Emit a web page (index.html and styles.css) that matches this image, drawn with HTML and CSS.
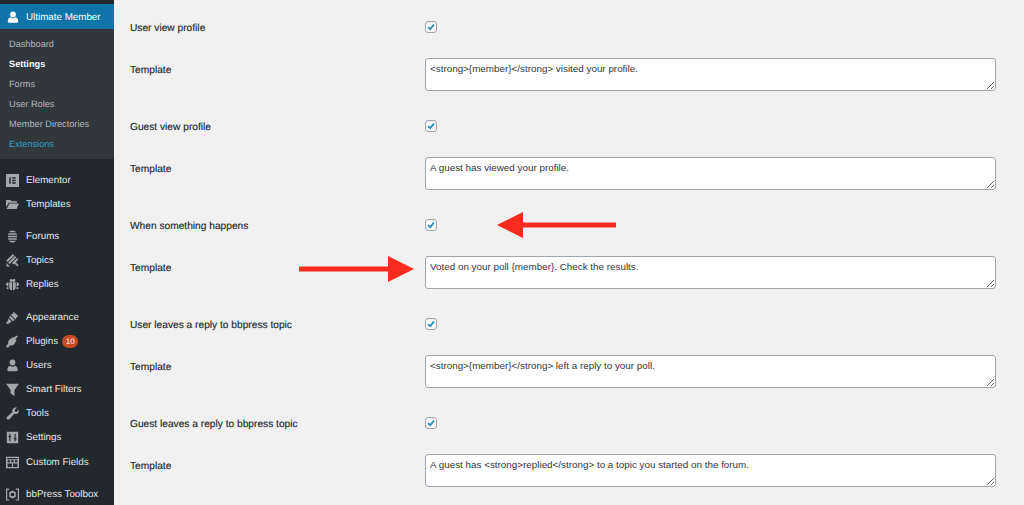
FILE: index.html
```html
<!DOCTYPE html>
<html lang="en">
<head>
<meta charset="utf-8">
<title>Ultimate Member Settings</title>
<link rel="stylesheet" href="styles.css">
</head>
<body>
<div class="page">
<nav class="sidebar">
  <div class="current">
    <svg class="ic" viewBox="0 0 16 16"><circle cx="8" cy="4.600" r="3.800"/><path d="M1 14.500c0-4 1.800-5.600 3.900-6.200.8.900 1.900 1.400 3.100 1.400s2.300-.5 3.100-1.400c2.100.6 3.900 2.200 3.900 6.200 0 .6-3.200 1.300-7 1.300s-7-.7-7-1.300z"/></svg>
    <span>Ultimate Member</span>
  </div>
  <ul class="submenu">
    <li>Dashboard</li>
    <li class="on">Settings</li>
    <li>Forms</li>
    <li>User Roles</li>
    <li>Member Directories</li>
    <li class="ext">Extensions</li>
  </ul>
  <ul class="menu">
    <li><svg class="ic" viewBox="0 0 16 16"><path fill-rule="evenodd" d="M0 0h16v16H0zM4 4v8h1.800V4zM7.500 4v1.700h4.500V4zM7.500 7.150v1.700h4.500v-1.700zM7.500 10.300V12h4.500v-1.700z"/></svg>Elementor</li>
    <li><svg class="ic" viewBox="0 0 16 16"><path d="M0 2.500h5.500L7 4h6.500v1.800H3.500L0 11.500zM4.300 6.800H16l-3 6.700H.8z"/></svg>Templates</li>
    <li class="sep"><svg class="ic" viewBox="0 0 16 16"><path d="M8 .5c2 0 3.600.9 4.200 2.300H3.800C4.400 1.400 6 .5 8 .5zM3 4h10l.5 1.800h-11zM2.300 7h11.400v2H2.300zM2.500 10.200h11L13 12H3zM3.800 13.200h8.400C11.600 14.600 10 15.500 8 15.500s-3.600-.9-4.200-2.300z"/></svg>Forums</li>
    <li><svg class="ic" viewBox="0 0 16 16"><path d="M8.500 0l1.700 1.700-8.200 8.100L.3 8.100zM11 2.500l1.700 1.700-8.300 8.200-1.700-1.700zM13.600 5l1.700 1.700-6.200 6.100-1.700-1.700zM10 11.500l1.600-1.600 4 4L14 15.500zM.5 11l4.500 4.500H.5z"/></svg>Topics</li>
    <li><svg class="ic" viewBox="0 0 16 16"><path d="M5 1.500C6 .8 7 1 8 2c1-1 2-1.200 3-.5.800.8.800 2 0 3H5c-.8-1-.8-2.200 0-3zM4 5.200h3.500V15C5.500 15 4 13.500 4 11zM8.500 5.200H12V11c0 2.500-1.500 4-3.500 4zM3 5.500V10c-2 .2-3-1-3-2.300S1 5 3 5.500zM13 5.500c2-.5 3 .9 3 2.200S15 10.200 13 10zM3 11v2.800c-1.500.2-2.500-.6-2.500-1.500S1.500 10.800 3 11zM13 11c1.500-.2 2.500.4 2.500 1.300s-1 1.700-2.500 1.500z"/></svg>Replies</li>
    <li class="sep"><svg class="ic" viewBox="0 0 16 16"><path d="M9 .5l6.500 6-2 .5-1.500 3.500L6 4.500 8.800 3zM5.300 5.500l5.500 5.500-2.300 1.500L3.800 8zM3 9l4 4-1.800 1L2.500 16H.5v-2l2.200-2.700z"/></svg>Appearance</li>
    <li><svg class="ic" viewBox="0 0 16 16"><path d="M12.500 .5l2 1.300-3 3.700 1.500 1.200-3.500 5.300c-1.800 1.200-3.500 1.200-4.800.5L3 15.500H.5V13L3 10.500c-.5-1.200-.5-3 .7-4.500l5-3.500 1.200 1z"/></svg>Plugins <b class="badge">10</b></li>
    <li><svg class="ic" viewBox="0 0 16 16"><circle cx="8" cy="4.200" r="3.500"/><path d="M1.500 14c0-3.800 1.800-5.300 3.600-5.800.8.900 1.800 1.300 2.900 1.300s2.100-.4 2.900-1.300c1.800.5 3.600 2 3.600 5.800 0 .6-3 1.200-6.500 1.200S1.500 14.600 1.500 14z"/></svg>Users</li>
    <li><svg class="ic" viewBox="0 0 16 16"><path d="M0 1h16l-5.600 7.500V16L5.600 13V8.500z"/></svg>Smart Filters</li>
    <li><svg class="ic" viewBox="0 0 16 16"><path d="M15.500 3c.7 2.300-.3 5-2.800 5.600-1 .2-1.800.1-2.500-.2L4.500 14.800c-.9.900-3.500 1-3.700-.5-.3-1 0-1.700.6-2.300l6.500-6c-.3-1.100-.2-2.500.7-3.800C9.700.7 11.800.3 13.500.8L10.700 3.500l.5 2.200 2.100.5z"/></svg>Tools</li>
    <li><svg class="ic" viewBox="0 0 16 16"><path fill-rule="evenodd" d="M1 1h14v14H1zM4 3.500V6H3v1.500h1v5h1.400v-5h1V6h-1V3.500zM10.500 3.500v5h-1V10h1v2.500h1.400V10h1V8.500h-1v-5z"/></svg>Settings</li>
    <li><svg class="ic" viewBox="0 0 16 16"><path fill-rule="evenodd" d="M0 1h16v14H0zM1.500 2.500v1.500h13V2.500zM2 5.200v2.600h3V5.200zM6.500 5.200v2.600h3V5.200zM11 5.200v2.600h3V5.200zM2 9.200v4.300h5.300V9.200zM8.700 9.200v4.300H14V9.200z"/></svg>Custom Fields</li>
    <li class="sep"><svg class="ic" viewBox="0 0 16 16"><path fill-rule="evenodd" d="M0 .5h4V2H1.500v12H4v1.500H0zM12 .5h4v15h-4V14h2.500V2H12zM8 3l4 2.300v5.400L8 13l-4-2.300V5.300zM8 5.700a2.300 2.300 0 1 0 0 4.600 2.300 2.300 0 0 0 0-4.600z"/></svg>bbPress Toolbox</li>
  </ul>
</nav>
<main class="content">
  <div class="row check"><span class="label">User view profile</span><span class="box"><svg viewBox="0 0 12 12"><path d="M2.500 6.200l2.500 2.500 4.500-5.500"/></svg></span></div>
  <div class="row tpl"><span class="label">Template</span><textarea class="field" readonly>&lt;strong&gt;{member}&lt;/strong&gt; visited your profile.</textarea></div>
  <div class="row check"><span class="label">Guest view profile</span><span class="box"><svg viewBox="0 0 12 12"><path d="M2.500 6.200l2.500 2.500 4.500-5.500"/></svg></span></div>
  <div class="row tpl"><span class="label">Template</span><textarea class="field" readonly>A guest has viewed your profile.</textarea></div>
  <div class="row check"><span class="label">When something happens</span><span class="box"><svg viewBox="0 0 12 12"><path d="M2.500 6.200l2.500 2.500 4.500-5.500"/></svg></span></div>
  <div class="row tpl"><span class="label">Template</span><textarea class="field" readonly>Voted on your poll {member}. Check the results.</textarea></div>
  <div class="row check"><span class="label">User leaves a reply to bbpress topic</span><span class="box"><svg viewBox="0 0 12 12"><path d="M2.500 6.200l2.500 2.500 4.500-5.500"/></svg></span></div>
  <div class="row tpl"><span class="label">Template</span><textarea class="field" readonly>&lt;strong&gt;{member}&lt;/strong&gt; left a reply to your poll.</textarea></div>
  <div class="row check"><span class="label">Guest leaves a reply to bbpress topic</span><span class="box"><svg viewBox="0 0 12 12"><path d="M2.500 6.200l2.500 2.500 4.500-5.500"/></svg></span></div>
  <div class="row tpl"><span class="label">Template</span><textarea class="field" readonly>A guest has &lt;strong&gt;replied&lt;/strong&gt; to a topic you started on the forum.</textarea></div>
</main>
<svg class="arrow arrow-a" viewBox="0 0 119 26"><path d="M0 13L26 0v10.500h93v5H26V26z"/></svg>
<svg class="arrow arrow-b" viewBox="0 0 115 26"><path d="M115 13L89 0v10.500H0v5h89V26z"/></svg>
</div>
</body>
</html>
```
FILE: styles.css
```css
* { box-sizing: border-box; }
html, body { margin: 0; height: 100%; overflow: hidden; }
body { font-family: "Liberation Sans", Arial, sans-serif; background: #f1f1f1; color: #23282d; text-rendering: geometricPrecision; }
.page { position: relative; display: flex; width: 1024px; height: 505px; overflow: hidden; }

.sidebar { flex: 0 0 114px; height: 505px; background: #23282d; color: #e6e7e8; font-size: 9.8px; overflow: hidden; padding-top: 4px; }
.current { display: flex; align-items: center; gap: 7px; height: 25px; padding: 1px 0 0 7px; background: #0f74a8; color: #fff; }
.ic { flex: 0 0 auto; width: 13px; height: 13px; fill: #a4a7aa; }
.current .ic { width: 12px; height: 12px; fill: #fff; }
ul { list-style: none; margin: 0; padding: 0; }
.submenu { background: #32373c; padding: 5px 0 5px; height: 130px; }
.submenu li { height: 20px; line-height: 20px; padding-left: 9px; color: #b4b9be; font-size: 9.2px; }
.submenu .on { color: #fff; font-weight: 700; }
.submenu .ext { color: #2ea2cc; }
.menu { padding-top: 9px; }
.menu li { display: flex; align-items: center; height: 24.2px; padding-left: 6px; gap: 7px; white-space: nowrap; }
.menu .sep { margin-top: 8px; }
.badge { display: inline-block; margin-left: -3px; min-width: 16px; height: 13px; line-height: 13px; border-radius: 7px; background: #ca4a1f; color: #fff; font-size: 8px; font-weight: 400; text-align: center; }

.content { flex: 1 1 auto; padding: 8px 28px 0 16px; }
.row { display: flex; align-items: center; }
.label { flex: 0 0 295px; font-size: 10.2px; line-height: 14px; color: #23282d; -webkit-text-stroke: 0.15px #23282d; }
.check { height: 38px; }
.check .label { padding-top: 4px; height: 18px; }
.tpl { height: 33px; margin: 12px 0 16px; align-items: flex-start; }
.tpl .label { padding-top: 6px; }
.box { display: block; width: 12px; height: 12px; border: 1px solid #9ea5ad; border-radius: 3px; background: #fff; box-shadow: inset 0 1px 2px rgba(0,0,0,.1); }
.box svg { display: block; width: 10px; height: 10px; fill: none; stroke: #1e8cbe; stroke-width: 2.2; }
.field { display: block; flex: 0 0 571px; width: 571px; height: 33px; padding: 3px 4px; margin: 0; border: 1px solid #9ea5ad; border-radius: 3px; background: #fff; color: #32373c; font: 9.85px/14px "Liberation Sans", Arial, sans-serif; outline: none; overflow: hidden; }

.arrow { position: absolute; fill: #fb2a1e; height: 26px; }
.arrow-a { left: 497px; top: 212px; width: 119px; }
.arrow-b { left: 299px; top: 256px; width: 115px; }
```
